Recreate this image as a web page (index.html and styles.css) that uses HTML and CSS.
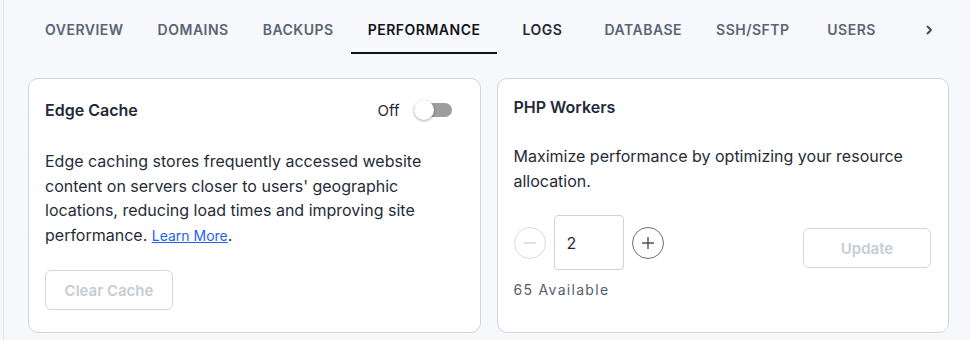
FILE: index.html
```html
<!DOCTYPE html>
<html lang="en">

<head>
    <meta charset="UTF-8">
    <meta name="viewport" content="width=device-width, initial-scale=1.0">
    <title>Performance</title>
    <link rel="stylesheet" href="styles.css">
</head>

<body>
    <div class="page">
        <nav class="tabs">
            <a class="tab">Overview</a>
            <a class="tab">Domains</a>
            <a class="tab">Backups</a>
            <a class="tab active">Performance</a>
            <a class="tab hover">Logs</a>
            <a class="tab">Database</a>
            <a class="tab">SSH/SFTP</a>
            <a class="tab">Users</a>
            <button class="tab-next" aria-label="More">
                <svg width="12" height="12" viewBox="0 0 12 12"><path d="M4.5 2.5 8 6l-3.5 3.5" fill="none" stroke="#3f4754" stroke-width="1.8" stroke-linecap="round" stroke-linejoin="round"/></svg>
            </button>
        </nav>

        <div class="cards">
            <section class="card">
                <div class="card-head">
                    <h2>Edge Cache</h2>
                    <label class="switch">
                        <span>Off</span>
                        <span class="track"><span class="knob"></span></span>
                    </label>
                </div>
                <p class="card-text">Edge caching stores frequently accessed website content on servers closer to users' geographic locations, reducing load times and improving site performance. <a href="#" class="link">Learn More</a>.</p>
                <button class="btn" disabled>Clear Cache</button>
            </section>

            <section class="card">
                <h2 class="card-title">PHP Workers</h2>
                <p class="card-text">Maximize performance by optimizing your resource allocation.</p>
                <div class="workers">
                    <div>
                        <div class="stepper">
                            <button class="round minus" disabled>
                                <svg width="14" height="14" viewBox="0 0 14 14"><path d="M1 7h12" stroke="currentColor" stroke-width="1.4"/></svg>
                            </button>
                            <input class="count" type="text" value="2">
                            <button class="round plus">
                                <svg width="14" height="14" viewBox="0 0 14 14"><path d="M1 7h12M7 1v12" stroke="currentColor" stroke-width="1.4"/></svg>
                            </button>
                        </div>
                        <div class="available">65 Available</div>
                    </div>
                    <button class="btn update" disabled>Update</button>
                </div>
            </section>
        </div>
    </div>
</body>

</html>
```

FILE: styles.css
```css
body {
    margin: 0;
    font-family: 'Inter', 'Noto Sans', sans-serif;
    background-color: #f6f8fb;
    color: #1f2937;
}

.page {
    margin-left: 3px;
    border-left: 1px solid #dfe3e8;
    padding: 0 21px 0 24px;
    min-height: 340px;
}

.tabs {
    display: flex;
    align-items: flex-start;
}

.tab {
    min-width: 90px;
    box-sizing: border-box;
    padding: 21px 17px 14px;
    border-bottom: 2px solid transparent;
    text-align: center;
    font-size: 14px;
    line-height: 17px;
    font-weight: 600;
    letter-spacing: 0.5px;
    text-transform: uppercase;
    color: #5b6472;
    cursor: pointer;
}

.tab.active {
    color: #111318;
    border-bottom-color: #111318;
}

.tab.hover {
    color: #1f2937;
}

.tab-next {
    margin-left: auto;
    width: 40px;
    height: 20px;
    margin-top: 20px;
    padding: 0;
    border: none;
    background: none;
    display: flex;
    align-items: center;
    justify-content: center;
    cursor: pointer;
}

.cards {
    display: grid;
    grid-template-columns: 1fr 1fr;
    gap: 16px;
    margin-top: 24px;
}

.card {
    background: #fff;
    border: 1px solid #cfd4db;
    border-radius: 10px;
    padding: 15px 16px 23px;
    height: 255px;
    box-sizing: border-box;
}

.card-head {
    display: flex;
    align-items: center;
    justify-content: space-between;
    height: 32px;
}

.card h2 {
    margin: 0;
    font-size: 16px;
    font-weight: 600;
    color: #1f2937;
}

.card-title {
    line-height: 27px;
}

.card-text {
    margin: 23px 0 22px;
    font-size: 16px;
    line-height: 24.5px;
    color: #252c38;
}

.link {
    font-size: 14px;
    color: #2563eb;
}

.switch {
    display: flex;
    align-items: center;
    gap: 14px;
    margin-right: 12px;
    font-size: 15px;
    color: #1f2937;
}

.track {
    position: relative;
    width: 38px;
    height: 14px;
    border-radius: 7px;
    background: #9e9e9e;
}

.knob {
    position: absolute;
    left: 0;
    top: -3px;
    width: 20px;
    height: 20px;
    border-radius: 50%;
    background: #fff;
    box-shadow: 0 1px 3px rgba(0, 0, 0, 0.35);
}

.btn {
    width: 128px;
    height: 40px;
    background: #fff;
    border: 1px solid #d3d8df;
    border-radius: 6px;
    font-family: inherit;
    font-size: 15px;
    font-weight: 600;
    color: #c6ccd5;
}

.workers {
    display: flex;
    justify-content: space-between;
    align-items: flex-start;
    padding-right: 1px;
}

.stepper {
    display: flex;
    align-items: center;
    gap: 8px;
}

.round {
    width: 32px;
    height: 32px;
    border-radius: 50%;
    padding: 0;
    background: #fff;
    display: flex;
    align-items: center;
    justify-content: center;
}

.minus {
    border: 1px solid #d5dae1;
    color: #d1d5db;
}

.plus {
    border: 1px solid #6b6f75;
    color: #4b5058;
    cursor: pointer;
}

.count {
    width: 70px;
    height: 55px;
    box-sizing: border-box;
    border: 1px solid #cfd4db;
    border-radius: 4px;
    padding: 0 12px;
    font-family: inherit;
    font-size: 16px;
    color: #1f2937;
}

.available {
    margin-top: 11px;
    font-size: 14px;
    letter-spacing: 1.3px;
    color: #555d6a;
}

.update {
    margin-top: 13px;
}
```
